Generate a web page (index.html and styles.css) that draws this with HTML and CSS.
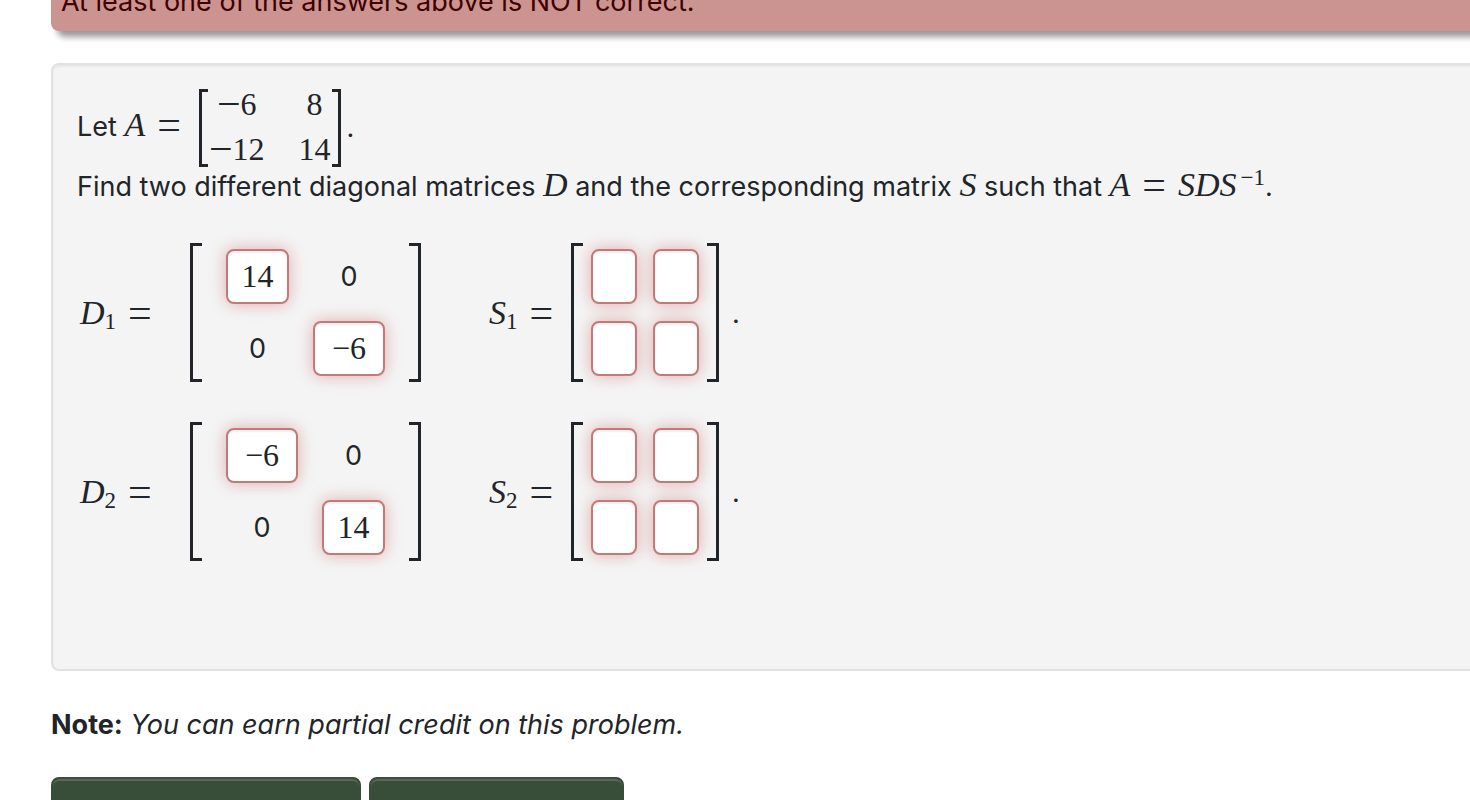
FILE: index.html
```html
<!DOCTYPE html>
<html lang="en">
<head>
    <meta charset="UTF-8">
    <meta name="viewport" content="width=device-width, initial-scale=1.0">
    <title>Diagonal Matrices</title>
    <link rel="stylesheet" href="styles.css">
</head>
<body>
    <main class="page">
        <div class="alert">At least one of the answers above is NOT correct.</div>

        <form class="problem-form">
            <section class="problem">
                <div class="given">
                    <div class="given-label">Let <i class="var">A</i><span class="op">=</span></div>
                    <div class="matrix matrix-a math">
                        <span><span class="minus">−</span>6</span>
                        <span>8</span>
                        <span><span class="minus">−</span>12</span>
                        <span>14</span>
                    </div>
                    <span class="given-end">.</span>
                </div>
                <p class="question">Find two different diagonal matrices <i class="var">D</i> and the corresponding matrix <i class="var">S</i> such that <i class="var">A</i><span class="op">=</span><i class="var">SDS</i><sup>−1</sup>.</p>

                <div class="equation">
                    <div class="label label-d math"><i class="var">D</i><sub>1</sub><span class="op">=</span></div>
                    <div class="matrix matrix-d">
                        <input class="answer two" type="text" value="14" aria-label="D1 row 1 column 1">
                        <span>0</span>
                        <span>0</span>
                        <input class="answer three" type="text" value="−6" aria-label="D1 row 2 column 2">
                    </div>
                    <div class="label label-s math"><i class="var">S</i><sub>1</sub><span class="op">=</span></div>
                    <div class="matrix matrix-s">
                        <input class="answer" type="text" aria-label="S1 row 1 column 1">
                        <input class="answer" type="text" aria-label="S1 row 1 column 2">
                        <input class="answer" type="text" aria-label="S1 row 2 column 1">
                        <input class="answer" type="text" aria-label="S1 row 2 column 2">
                    </div>
                    <span class="end">.</span>
                </div>

                <div class="equation">
                    <div class="label label-d math"><i class="var">D</i><sub>2</sub><span class="op">=</span></div>
                    <div class="matrix matrix-d">
                        <input class="answer three" type="text" value="−6" aria-label="D2 row 1 column 1">
                        <span>0</span>
                        <span>0</span>
                        <input class="answer two" type="text" value="14" aria-label="D2 row 2 column 2">
                    </div>
                    <div class="label label-s math"><i class="var">S</i><sub>2</sub><span class="op">=</span></div>
                    <div class="matrix matrix-s">
                        <input class="answer" type="text" aria-label="S2 row 1 column 1">
                        <input class="answer" type="text" aria-label="S2 row 1 column 2">
                        <input class="answer" type="text" aria-label="S2 row 2 column 1">
                        <input class="answer" type="text" aria-label="S2 row 2 column 2">
                    </div>
                    <span class="end">.</span>
                </div>
            </section>

            <p class="note"><b>Note:</b> <i>You can earn partial credit on this problem.</i></p>

            <div class="buttons">
                <button class="button button-wide" type="button"></button>
                <button class="button" type="button"></button>
            </div>
        </form>
    </main>
</body>
</html>
```
FILE: styles.css
```css
*,
*::before,
*::after {
    box-sizing: border-box;
}

body {
    margin: 0;
    height: 100vh;
    overflow: hidden;
    background: #fff;
    color: #212529;
    font-family: Inter, sans-serif;
    font-size: 27px;
    line-height: 40px;
}

.page {
    margin: -33px -40px 0 51px;
}

.alert {
    padding: 15px 10px 9px;
    border-radius: 8px;
    background: #cc9491;
    color: #400000;
    box-shadow: 6px 6px 6px #999;
}

.problem {
    margin-top: 32px;
    padding: 24px 24px 108px;
    border: 2px solid #e1e1e1;
    border-radius: 8px;
    background: #f4f4f4;
    box-shadow: inset 0 2px 2px rgba(0, 0, 0, 0.05);
}

/* math */
.math,
.var,
.op,
sup {
    font-family: "Liberation Serif", serif;
    font-size: 32px;
    line-height: 32px;
}

.var {
    font-size: 34px;
}

.op,
.minus {
    font-size: 42px;
    line-height: 0;
    vertical-align: -3px;
}

.op {
    margin: 0 12px;
}

sub,
sup {
    font-size: 23px;
    line-height: 0;
}

sub {
    vertical-align: -5px;
}

sup {
    margin-left: 4px;
    vertical-align: 11px;
}

/* square brackets on both sides of a grid */
.matrix {
    position: relative;
    display: grid;
    grid-template-columns: auto auto;
    justify-items: center;
    align-items: center;
}

.matrix::before,
.matrix::after {
    content: "";
    position: absolute;
    top: 0;
    bottom: 0;
    width: 12px;
    border: 3px solid #212529;
}

.matrix::before {
    left: 0;
    border-right: none;
}

.matrix::after {
    right: 0;
    border-left: none;
}

.given {
    display: flex;
    align-items: center;
}

.given-label {
    padding-bottom: 2px;
}

.matrix-a {
    margin-left: 6px;
    padding: 0 10px 4px;
    height: 78px;
    column-gap: 34px;
    grid-auto-rows: 45px;
    align-content: center;
}

.matrix-a::before,
.matrix-a::after {
    width: 9px;
}

.given-end {
    margin-left: 6px;
}

.question {
    margin: 0 0 36px;
}

.equation {
    display: flex;
    align-items: center;
    margin-bottom: 40px;
}

.equation:last-child {
    margin-bottom: 0;
}

.label-d {
    width: 113px;
    padding-left: 3px;
}

.label-s {
    width: 150px;
    padding-left: 68px;
}

.matrix-d {
    padding: 6px 36px;
    gap: 17px 24px;
}

.matrix-s {
    padding: 6px 20px;
    gap: 17px 16px;
}

.end {
    margin-left: 13px;
    padding-top: 2px;
}

.answer {
    width: 46px;
    height: 55px;
    padding: 0;
    border: 2px solid #c27a78;
    border-radius: 8px;
    background: #fff;
    color: #212529;
    font-family: "Liberation Serif", serif;
    font-size: 32px;
    text-align: center;
    box-shadow: inset 0 2px 2px rgba(0, 0, 0, 0.07), 0 0 16px rgba(190, 70, 65, 0.4);
}

.answer.two {
    width: 63px;
}

.answer.three {
    width: 72px;
}

.note {
    margin: 34px 0 32px;
}

.buttons {
    display: flex;
    gap: 8px;
}

.button {
    width: 255px;
    height: 72px;
    border: 2px solid #394e39;
    border-radius: 8px;
    background: #394e39;
    box-shadow: inset 0 2px 0 rgba(255, 255, 255, 0.15);
}

.button-wide {
    width: 310px;
}
```
